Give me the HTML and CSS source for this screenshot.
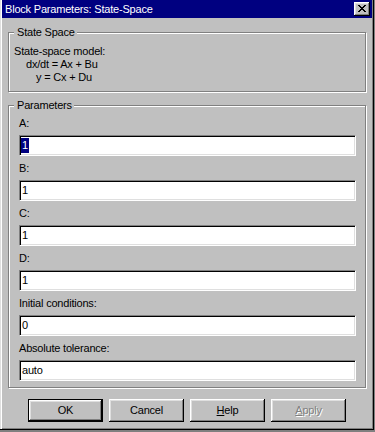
FILE: index.html
```html
<!DOCTYPE html>
<html>
<head>
<meta charset="utf-8">
<title>Block Parameters: State-Space</title>
<link rel="stylesheet" href="styles.css">
</head>
<body>
<div class="window">
  <div class="titlebar">
    <span class="title">Block Parameters: State-Space</span>
    <div class="close">
      <svg width="8" height="7" viewBox="0 0 8 7"><path d="M0 0h2v1H0z M6 0h2v1H6z M1 1h2v1H1z M5 1h2v1H5z M2 2h4v1H2z M3 3h2v1H3z M2 4h4v1H2z M1 5h2v1H1z M5 5h2v1H5z M0 6h2v1H0z M6 6h2v1H6z" fill="#000"/></svg>
    </div>
  </div>
  <div class="group group-info">
    <div class="legend">State Space</div>
    <div class="info">
      <div>State-space model:</div>
      <div class="eq1">dx/dt = Ax + Bu</div>
      <div class="eq2">y = Cx + Du</div>
    </div>
  </div>
  <div class="group group-params">
    <div class="legend">Parameters</div>
    <div class="fields">
      <div class="field"><div class="label">A:</div><div class="input"><span class="sel">1</span></div></div>
      <div class="field"><div class="label">B:</div><div class="input">1</div></div>
      <div class="field"><div class="label">C:</div><div class="input">1</div></div>
      <div class="field"><div class="label">D:</div><div class="input">1</div></div>
      <div class="field"><div class="label">Initial conditions:</div><div class="input">0</div></div>
      <div class="field"><div class="label">Absolute tolerance:</div><div class="input">auto</div></div>
    </div>
  </div>
  <div class="buttons">
    <div class="btn default">OK</div>
    <div class="btn">Cancel</div>
    <div class="btn"><u>H</u>elp</div>
    <div class="btn disabled"><u>A</u>pply</div>
  </div>
</div>
</body>
</html>
```
FILE: styles.css
```css
html, body {
  margin: 0;
  padding: 0;
  background: #808080;
}
body {
  width: 375px;
  height: 432px;
  overflow: hidden;
}
.window {
  box-sizing: border-box;
  width: 374px;
  height: 430px;
  background: #c0c0c0;
  border-right: 1px solid #000;
  border-bottom: 1px solid #000;
  box-shadow: inset 1px 0 #dfdfdf, inset 2px 0 #fff, inset -1px -1px #808080;
  padding: 0 1px 0 2px;
  display: flex;
  flex-direction: column;
  font-family: "Liberation Sans", Arial, sans-serif;
  font-size: 11px;
  letter-spacing: -0.2px;
  color: #000;
}
.titlebar {
  height: 18px;
  background: #000080;
  color: #fff;
  display: flex;
  align-items: center;
  justify-content: space-between;
  padding: 0 2px 0 3px;
}
.title {
  line-height: 18px;
}
.close {
  box-sizing: border-box;
  width: 16px;
  height: 14px;
  background: #c0c0c0;
  box-shadow: inset -1px -1px #000, inset 1px 1px #fff, inset -2px -2px #808080, inset 2px 2px #dfdfdf;
  display: flex;
  align-items: center;
  justify-content: center;
  padding: 0 0 1px 0;
}
.close svg {
  display: block;
}
.group {
  box-sizing: border-box;
  margin: 0 6px;
  border: 1px solid #808080;
  box-shadow: inset 1px 1px #fff, 1px 1px #fff;
  display: flex;
  flex-direction: column;
}
.legend {
  align-self: flex-start;
  margin: -7px 0 0 5px;
  padding: 0 2px 0 3px;
  line-height: 13px;
  background: #c0c0c0;
}
.group-info {
  margin-top: 14px;
  height: 60px;
}
.info {
  margin-top: 6px;
  padding-left: 5px;
  line-height: 13px;
}
.eq1 {
  padding-left: 12px;
}
.eq2 {
  padding-left: 22px;
}
.group-params {
  margin-top: 13px;
  height: 283px;
}
.fields {
  margin-top: 4px;
  padding: 0 9px 0 10px;
  display: flex;
  flex-direction: column;
  gap: 5px;
}
.field {
  display: flex;
  flex-direction: column;
  gap: 5px;
}
.label {
  line-height: 14px;
  height: 14px;
}
.input {
  box-sizing: border-box;
  height: 21px;
  background: #fff;
  border-style: solid;
  border-width: 1px;
  border-color: #808080 #fff #fff #808080;
  box-shadow: inset 1px 1px #000, inset -1px -1px #dfdfdf;
  padding: 0 0 0 2px;
  line-height: 19px;
}
.sel {
  display: inline-block;
  background: #000080;
  color: #fff;
  line-height: 15px;
  margin-left: -1px;
  padding: 0 1px;
  vertical-align: middle;
  position: relative;
  top: -1px;
}
.buttons {
  margin-top: 11px;
  display: flex;
  justify-content: center;
  gap: 6px;
}
.btn {
  box-sizing: border-box;
  width: 75px;
  height: 23px;
  background: #c0c0c0;
  box-shadow: inset -1px -1px #000, inset 1px 1px #fff, inset -2px -2px #808080, inset 2px 2px #dfdfdf;
  display: flex;
  align-items: center;
  justify-content: center;
  padding-bottom: 1px;
}
.btn.default {
  border: 1px solid #000;
}
.btn.disabled {
  color: #808080;
  text-shadow: 1px 1px 0 #fff;
}
.btn u {
  text-decoration: underline;
}
```
